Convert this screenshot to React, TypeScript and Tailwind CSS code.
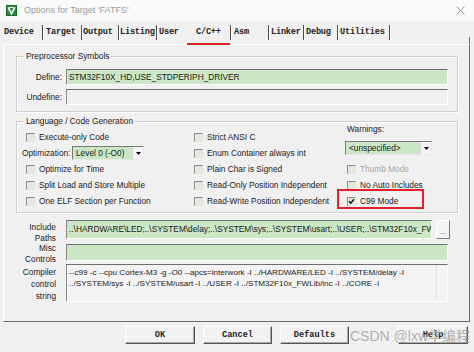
import React from "react";

const SANS = "font-['Liberation_Sans',Arial,sans-serif]";
const MONO = "font-['Liberation_Mono','Courier_New',monospace]";

function Check({ label, checked, disabled }: { label: string; checked?: boolean; disabled?: boolean }) {
  return (
    <div className="flex items-center h-[16px] gap-[4px]">
      <span className="w-[9px] h-[9px] flex items-center justify-center border border-t-[#8a8a8a] border-l-[#8a8a8a] border-b-[#e4e4e4] border-r-[#e4e4e4] bg-[#e2ecdd]">
        {checked && (
          <svg width="7" height="7" viewBox="0 0 7 7">
            <path d="M1 3.2 L2.8 5.2 L6 1.2" stroke="#111" strokeWidth="1.5" fill="none" />
          </svg>
        )}
      </span>
      <span className={disabled ? "text-[#a3a3a3]" : "text-[#1a1a1a]"}>{label}</span>
    </div>
  );
}

function Select({ value, cls }: { value: string; cls: string }) {
  return (
    <div className={`${cls} h-[14px] flex border border-t-[#7a7a7a] border-l-[#7a7a7a] border-b-[#e8e8e8] border-r-[#e8e8e8] bg-[#cbe7c5]`}>
      <div className="flex-1 flex items-center pl-[3px] text-[#1a1a1a] whitespace-nowrap overflow-hidden">{value}</div>
      <div className="w-[11px] h-full flex items-center justify-center bg-[#f4f4f4] border-l border-l-[#d8d8d8]">
        <svg width="5" height="3" viewBox="0 0 5 3">
          <path d="M0 0 H5 L2.5 3 Z" fill="#000" />
        </svg>
      </div>
    </div>
  );
}

function Group({ title, cls, children }: { title: string; cls: string; children: React.ReactNode }) {
  return (
    <div className={`relative ${cls} border border-[#cfcfcf] shadow-[inset_1px_1px_0_#ffffff,1px_1px_0_#ffffff]`}>
      <div className="absolute -top-[6px] left-[7px] px-[2px] bg-[#f0f0f0] leading-[10px] text-[#1a1a1a]">{title}</div>
      {children}
    </div>
  );
}

const inputBorder = "border border-t-[#6e6e6e] border-l-[#8a8a8a] border-b-[#ffffff] border-r-[#ffffff]";

function Tab({ label, cls, sep = true }: { label: string; cls: string; sep?: boolean }) {
  return (
    <>
      <div className={`${cls} h-full flex items-center whitespace-nowrap overflow-hidden`}>{label}</div>
      {sep && <div className="w-px h-[15px] bg-[#4a4a4a] shadow-[1px_0_0_#ffffff]" />}
    </>
  );
}

export default function App() {
  return (
    <div className={`w-[474px] h-[352px] bg-[#f0f0f0] overflow-hidden relative ${SANS} text-[8.3px]`}>
      {/* Title bar */}
      <div className="h-[21px] bg-[#fafafa] flex items-center pl-[6px] pr-[9px]">
        <svg width="11" height="11" viewBox="0 0 11 11">
          <rect x="0" y="0" width="11" height="11" fill="#2f8a3b" />
          <rect x="0.5" y="0.5" width="10" height="10" fill="none" stroke="#1d6a28" />
          <path d="M2.2 2.4 L5.5 8.8 L8.8 2.4" stroke="#ffffff" strokeWidth="1.6" fill="none" />
          <path d="M3.5 2.4 H7.5" stroke="#ffffff" strokeWidth="1" />
        </svg>
        <span className="ml-[7px] text-[9px] text-[#9a9a9a]">Options for Target 'FATFS'</span>
        <div className="flex-1" />
        <svg width="9" height="9" viewBox="0 0 9 9">
          <path d="M0.5 0.5 L8.5 8.5 M8.5 0.5 L0.5 8.5" stroke="#9a9a9a" strokeWidth="1" />
        </svg>
      </div>

      {/* Tabs */}
      <div className={`relative h-[23px] flex items-center ${MONO} font-bold text-[8.6px] tracking-[-0.2px] text-[#222]`}>
        <Tab label="Device" cls="w-[42px] pl-[4px]" />
        <Tab label="Target" cls="w-[38px] pl-[3px]" />
        <Tab label="Output" cls="w-[36px] pl-[1px]" />
        <Tab label="Listing" cls="w-[37px] pl-[1px]" />
        <Tab label="User" cls="w-[28px] pl-[2px]" sep={false} />
        <Tab label="C/C++" cls="w-[45px] pl-[11px]" />
        <Tab label="Asm" cls="w-[37px] pl-[3px]" />
        <Tab label="Linker" cls="w-[34px] pl-[2px]" />
        <Tab label="Debug" cls="w-[33px] pl-[2px]" />
        <Tab label="Utilities" cls="w-[51px] pl-[2px]" />
        <div className="absolute left-[187px] top-[22px] w-[43px] h-[2px] bg-[#dc2027]" />
        <div className="absolute left-[469px] top-[16px] w-px h-[7px] bg-[#707070]" />
      </div>

      {/* Panel */}
      <div className="ml-[3px] w-[467px] h-[278px] border border-t-[#ffffff] border-l-[#ffffff] border-r-[#6a6a6a] border-b-[#6a6a6a] flex flex-col">
        <Group title="Preprocessor Symbols" cls="ml-[12px] mt-[11px] w-[442px] h-[56px]">
          <div className="flex flex-col gap-[4px] pt-[12px]">
            <div className="flex items-center h-[16px]">
              <div className="w-[45px] text-right text-[#1a1a1a]">Define:</div>
              <div className={`ml-[4px] w-[382px] h-[16px] ${inputBorder} bg-[#cbe7c5] flex items-center pl-[2px] text-[#1a1a1a] whitespace-nowrap`}>
                STM32F10X_HD,USE_STDPERIPH_DRIVER
              </div>
            </div>
            <div className="flex items-center h-[16px]">
              <div className="w-[45px] text-right text-[#1a1a1a]">Undefine:</div>
              <div className={`ml-[4px] w-[382px] h-[16px] ${inputBorder} bg-[#f0f0f0]`} />
            </div>
          </div>
        </Group>

        <Group title="Language / Code Generation" cls="ml-[12px] mt-[9px] w-[442px] h-[92px]">
          <div className="flex pl-[5px]">
            <div className="w-[172px] flex flex-col pt-[7px]">
              <div className="pl-[4px]"><Check label="Execute-only Code" /></div>
              <div className="flex items-center h-[16px]">
                <div className="w-[50px] text-[#1a1a1a] whitespace-nowrap">Optimization:</div>
                <Select value="Level 0 (-O0)" cls="w-[72px]" />
              </div>
              <div className="pl-[4px]"><Check label="Optimize for Time" /></div>
              <div className="pl-[4px]"><Check label="Split Load and Store Multiple" /></div>
              <div className="pl-[4px]"><Check label="One ELF Section per Function" /></div>
            </div>
            <div className="w-[151px] flex flex-col pt-[7px]">
              <Check label="Strict ANSI C" />
              <Check label="Enum Container always int" />
              <Check label="Plain Char is Signed" />
              <Check label="Read-Only Position Independent" />
              <Check label="Read-Write Position Independent" />
            </div>
            <div className="flex flex-col pt-[1px]">
              <div className="h-[12px] flex items-center pl-[2px] text-[#1a1a1a]">Warnings:</div>
              <div className="mt-[6px]"><Select value="<unspecified>" cls="w-[87px]" /></div>
              <div className="mt-[6px] pl-[2px]">
                <Check label="Thumb Mode" disabled />
                <Check label="No Auto Includes" />
                <div className="relative">
                  <Check label="C99 Mode" checked />
                  <div className="absolute -left-[10px] -top-[4px] w-[87px] h-[20px] border-2 border-[#e0232b]" />
                </div>
              </div>
            </div>
          </div>
        </Group>

        {/* Lower rows */}
        <div className="mt-[7px] flex flex-col">
          <div className="flex h-[19px]">
            <div className="w-[52px] text-right leading-[11px] pt-[2px] text-[#1a1a1a]">Include<br />Paths</div>
            <div className={`ml-[10px] w-[366px] h-[19px] ${inputBorder} bg-[#cbe7c5] flex items-center pl-[2px] text-[#1a1a1a] whitespace-nowrap overflow-hidden`}>
              ..\HARDWARE\LED;..\SYSTEM\delay;..\SYSTEM\sys;..\SYSTEM\usart;..\USER;..\STM32F10x_FWLib\inc;..\CORE
            </div>
            <div className="ml-[4px] w-[14px] h-[19px] bg-[#f4f4f4] border border-t-[#ffffff] border-l-[#ffffff] border-r-[#7a7a7a] border-b-[#7a7a7a] flex items-end justify-center pb-[3px] text-[7px] leading-[7px] text-[#333]">...</div>
          </div>
          <div className="flex h-[17px] mt-[5px]">
            <div className="w-[52px] text-right leading-[11px] -mt-[1px] text-[#1a1a1a]">Misc<br />Controls</div>
            <div className={`ml-[10px] w-[382px] h-[17px] ${inputBorder} bg-[#cbe7c5]`} />
          </div>
          <div className="flex h-[38px] mt-[3px]">
            <div className="w-[52px] text-right leading-[12px] pt-[2px] text-[#1a1a1a]">Compiler<br />control<br />string</div>
            <div className={`ml-[10px] w-[382px] h-[38px] ${inputBorder} bg-[#f3f3f3] flex`}>
              <div className="flex-1 pl-[2px] pt-[2px] leading-[11px] text-[8.1px] text-[#1a1a1a] whitespace-nowrap overflow-hidden">
                <div>--c99 -c --cpu Cortex-M3 -g -O0 --apcs=interwork -I ../HARDWARE/LED -I ../SYSTEM/delay -I</div>
                <div>../SYSTEM/sys -I ../SYSTEM/usart -I ../USER -I ../STM32F10x_FWLib/inc -I ../CORE -I</div>
              </div>
              <div className="w-[11px] border-l border-l-[#e2e2e2]" />
            </div>
          </div>
        </div>
      </div>

      {/* Buttons */}
      <div className={`flex mt-[4px] ${MONO} font-bold text-[8.6px] text-[#222]`}>
        {[
          { l: "OK", c: "ml-[125px] w-[70px]" },
          { l: "Cancel", c: "ml-[8px] w-[69px]" },
          { l: "Defaults", c: "ml-[8px] w-[69px]" },
          { l: "Help", c: "ml-[49px] w-[70px]" },
        ].map((b) => (
          <div
            key={b.l}
            className={`${b.c} h-[18px] flex items-center justify-center bg-[#f2f2f2] border border-t-[#ffffff] border-l-[#ffffff] border-r-[#555555] border-b-[#555555] shadow-[inset_-1px_-1px_0_#a8a8a8]`}
          >
            {b.l}
          </div>
        ))}
      </div>

      {/* Watermark */}
      <div className="absolute left-[350px] top-[327px] text-[14px] leading-[18px] whitespace-nowrap text-[#9c9c9c]/80 font-['Liberation_Sans','Noto_Sans_CJK_SC',sans-serif]">
        CSDN @lxw学编程
      </div>
    </div>
  );
}
